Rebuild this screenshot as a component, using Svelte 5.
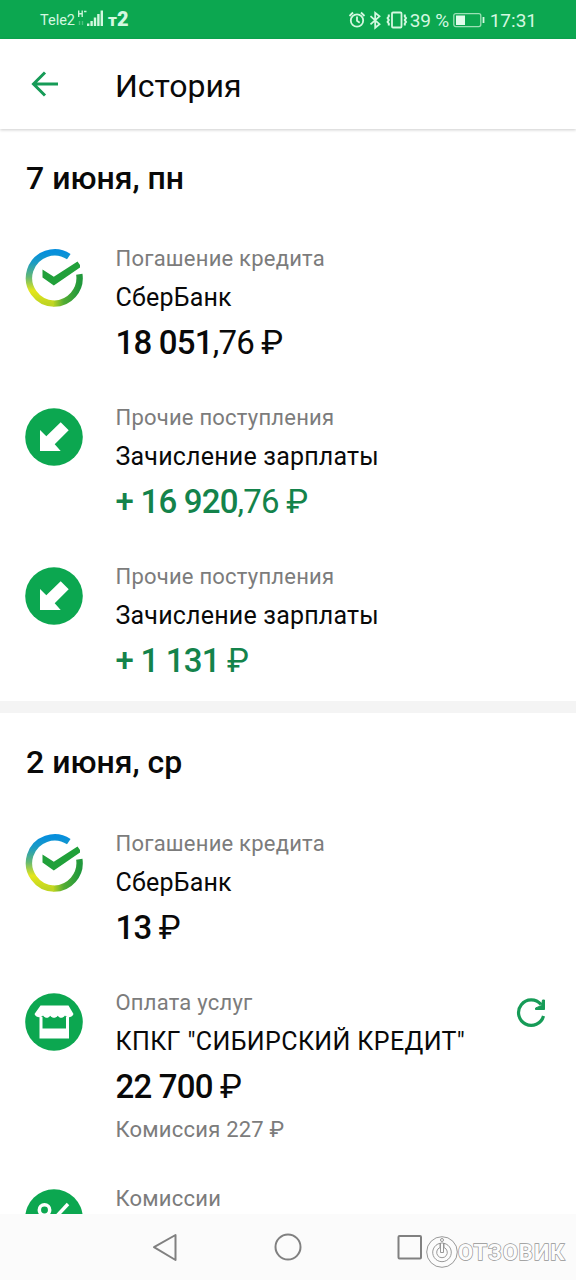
<script>
	const days = [
		{
			date: '7 июня, пн',
			items: [
				{ icon: 'sber', category: 'Погашение кредита', name: 'СберБанк', whole: '18 051', rest: ',76 ₽' },
				{ icon: 'income', category: 'Прочие поступления', name: 'Зачисление зарплаты', whole: '+ 16 920', rest: ',76 ₽', plus: true },
				{ icon: 'income', category: 'Прочие поступления', name: 'Зачисление зарплаты', whole: '+ 1 131', rest: ' ₽', plus: true }
			]
		},
		{
			date: '2 июня, ср',
			items: [
				{ icon: 'sber', category: 'Погашение кредита', name: 'СберБанк', whole: '13', rest: ' ₽' },
				{ icon: 'shop', category: 'Оплата услуг', name: 'КПКГ "СИБИРСКИЙ КРЕДИТ"', whole: '22 700', rest: ' ₽', fee: 'Комиссия 227 ₽', repeat: true },
				{ icon: 'percent', category: 'Комиссии' }
			]
		}
	];
</script>

<div class="phone">
	<div class="status">
		<span class="carrier">Tele2</span>
		<svg class="signal" width="29" height="20" viewBox="0 0 29 20">
			<g fill="none" stroke="#c9f5d8" stroke-width="1.4">
				<path d="M1.700 1.500v6.500M5.200 1.500v6.500M1.500 4.700h4M7 2.500h2.500" />
				<path d="M2.500 12v4M5.500 12v4" opacity=".35" />
			</g>
			<path fill="#d4f8e0" d="M10 14.500h2.400V17H10zM13.400 12h2.400v5h-2.400zM16.800 8.500h2.400V17h-2.400zM20.200 5h2.400v12h-2.400zM23.600 1.500H26V17h-2.400z" />
		</svg>
		<span class="t-logo">т<b>2</b></span>
		<span class="space"></span>
		<svg width="62" height="20" viewBox="0 0 62 20" fill="none" stroke="#d4f8e0" stroke-width="1.8">
			<circle cx="9" cy="10.500" r="6.200" />
			<path d="M9 6.500v4.300l2.700 2M1.500 6L5 2.500M16.500 6L13 2.500" />
			<path d="M22.500 6.200l9 8-4.300 3.600v-15l4.300 3.500-9 8" />
			<rect x="44" y="2.500" width="9.500" height="15" rx="1" />
			<path d="M40.800 4.500v2l-1.200 1.500 1.200 2-1.200 2 1.200 1.500v2M56.800 4.500v2l1.200 1.500-1.200 2 1.200 2-1.200 1.500v2" stroke-width="2" />
		</svg>
		<span class="battery-text">39 %</span>
		<svg class="battery" width="32" height="16" viewBox="0 0 32 16">
			<rect x=".8" y="1.600" width="27" height="13" rx="2" fill="none" stroke="#9be0b5" stroke-width="1.300" />
			<rect x="3" y="3.500" width="9" height="9.500" fill="#e2fceb" />
			<path d="M30.500 5v6" stroke="#d4f8e0" stroke-width="1.800" />
		</svg>
		<span class="clock">17:31</span>
	</div>

	<header>
		<svg width="28" height="26" viewBox="0 0 28 26" fill="none" stroke="#169b57" stroke-width="3">
			<path d="M27 13H3M14 1.500L2.500 13 14 24.500" />
		</svg>
		<h1>История</h1>
	</header>

	<main>
		{#each days as day}
			<section>
				<h2>{day.date}</h2>
				{#each day.items as item}
					<div class="item">
						<svg class="icon" width="58" height="58" viewBox="0 0 58 58">
							{#if item.icon === 'sber'}
								<defs>
									<linearGradient id="left" x1="0" y1="0" x2="0" y2="1">
										<stop offset="0" stop-color="#078fdc" />
										<stop offset=".2" stop-color="#1b9bc3" />
										<stop offset=".48" stop-color="#63b874" />
										<stop offset=".75" stop-color="#e5e61c" />
										<stop offset="1" stop-color="#c0d522" />
									</linearGradient>
									<linearGradient id="right" x1="0" y1="0" x2="1" y2="0">
										<stop offset="0" stop-color="#b8d322" />
										<stop offset=".4" stop-color="#52ac34" />
										<stop offset="1" stop-color="#21983c" />
									</linearGradient>
								</defs>
								<g fill="none" stroke-width="6.4">
									<path d="M43.800 7.700A25.600 25.600 0 1 0 29 54.600" stroke="url(#left)" />
									<path d="M28.500 54.600A25.600 25.600 0 0 0 54.300 25.200" stroke="url(#right)" />
								</g>
								<path d="M17.500 20.500l11.300 7.300L52.500 12.500l2.500 3.500v2.500L28.800 36.500l-11.300-8z" fill="#21a03a" />
							{:else}
								<circle cx="29" cy="29" r="28.800" fill="#0ca750" />
								{#if item.icon === 'income'}
									<path fill="#fff" d="M35.700 14.300l8 8-14 14 6 6.700H15V22l6.300 6.300z" />
								{:else if item.icon === 'shop'}
									<path fill="#fff" d="M15.500 12.500h28l5 8.500c-1.500 3.800-6.500 4.200-8.500 1.500-2 3-5.500 3-7.300.3-1.800 2.700-5.600 2.700-7.400 0-1.800 2.700-5.300 2.700-7.300-.3-2 2.700-7 2.300-8.500-1.500z" />
									<path fill="#fff" d="M14.500 24h3v11.500h23.500V24h3v21.500H14.500z" />
								{:else}
									<g fill="none" stroke="#fff" stroke-width="3.500">
										<circle cx="19.500" cy="21" r="5.200" />
										<circle cx="38" cy="38" r="5.200" />
										<path d="M43 15L16 44" />
									</g>
								{/if}
							{/if}
						</svg>
						<div class="info">
							<p class="category">{item.category}</p>
							{#if item.name}
								<p class="name" class:caps={item.icon === 'shop'}>{item.name}</p>
								<p class="amount" class:plus={item.plus}><b>{item.whole}</b>{item.rest}</p>
							{/if}
							{#if item.fee}
								<p class="category fee">{item.fee}</p>
							{/if}
						</div>
						{#if item.repeat}
							<svg class="repeat" width="32" height="32" viewBox="0 0 32 32">
								<path d="M26 7.500A12.700 12.700 0 1 0 28.500 19" fill="none" stroke="#169b57" stroke-width="3.200" />
								<path d="M29.500 3v9.500H20.500v-1.500l6-2.500 1-5.500z" fill="#169b57" stroke="#169b57" />
							</svg>
						{/if}
					</div>
				{/each}
			</section>
		{/each}
	</main>

	<nav>
		<svg width="576" height="66" viewBox="0 0 576 66" fill="none" stroke="#808080" stroke-width="2" stroke-linejoin="round">
			<path d="M175.500 21v25L154 33.200z" />
			<circle cx="288" cy="33" r="12.500" />
			<rect x="398.500" y="22" width="22.500" height="22.500" rx="1" />
		</svg>
		<div class="watermark">
			<svg width="32" height="32" viewBox="0 0 32 32" fill="#fcfcfc" stroke="#8c8c8c" stroke-width=".9">
				<circle cx="16" cy="16" r="15.300" />
				<path d="M14 7.300a9.300 9.300 0 1 0 4 0v4.200a5.300 5.300 0 1 1-4 0z" />
				<path d="M14.500 7h3v9.500h-3z" />
				<circle cx="16" cy="4" r="1.500" />
			</svg>
			<span>ОТЗОВИК</span>
		</div>
	</nav>
</div>

<style>
	:global(body) {
		background: #fff;
	}

	.phone {
		width: 576px;
		height: 1280px;
		overflow: hidden;
		display: flex;
		flex-direction: column;
		font-family: Roboto, "Liberation Sans", sans-serif;
		color: #090909;
	}

	h1, h2, p {
		margin: 0;
	}

	.status {
		flex: none;
		height: 39px;
		box-sizing: border-box;
		padding: 1px 39px 0 40px;
		display: flex;
		align-items: center;
		background: #0ca750;
		color: #d4f8e0;
	}

	.carrier {
		font-size: 14.5px;
		width: 37px;
	}

	.signal {
		margin-top: -3px;
	}

	.t-logo {
		font-size: 17px;
		font-weight: 900;
		margin: -2px 0 0 2px;
	}

	.t-logo b {
		font-size: 20px;
		font-weight: 900;
	}

	.space {
		flex: 1;
	}

	.battery-text {
		font-size: 19px;
		width: 43px;
		white-space: nowrap;
		letter-spacing: -0.2px;
	}

	.clock {
		font-size: 19px;
		margin-left: 5px;
	}

	header {
		flex: none;
		height: 90px;
		display: flex;
		align-items: center;
		padding-left: 31px;
		box-shadow: 0 1px 3px rgba(0, 0, 0, 0.2);
		z-index: 1;
	}

	h1 {
		font-size: 32px;
		font-weight: 400;
		margin: 4px 0 0 56px;
	}

	main {
		flex: 1;
		min-height: 0;
		overflow: hidden;
	}

	section {
		padding-bottom: 16px;
	}

	section + section {
		border-top: 12px solid #f4f4f4;
		margin-top: -32px;
	}

	h2 {
		font-size: 32px;
		font-weight: 500;
		line-height: 40px;
		padding: 29px 26px 42px;
	}

	section + section h2 {
		padding-bottom: 43px;
	}

	.item {
		display: flex;
		align-items: flex-start;
		padding: 0 29px 32px 25px;
	}

	.icon {
		margin-top: 9px;
	}

	.info {
		flex: 1;
		margin-left: 32.5px;
		white-space: nowrap;
	}

	.category {
		font-size: 22px;
		line-height: 38px;
		letter-spacing: 0.22px;
		color: #7c7c7c;
	}

	.name {
		font-size: 25px;
		line-height: 40px;
		letter-spacing: 0.2px;
	}

	.caps {
		letter-spacing: 0.38px;
	}

	.amount {
		font-size: 33px;
		line-height: 50px;
		margin-bottom: -1px;
		letter-spacing: -0.8px;
	}

	.amount b {
		font-weight: 500;
	}

	.plus {
		color: #14834b;
	}

	.fee {
		line-height: 37px;
	}

	.repeat {
		margin-top: 13px;
	}

	nav {
		flex: none;
		position: relative;
		height: 66px;
		background: #fbfbfb;
	}

	.watermark {
		position: absolute;
		left: 426px;
		top: 22px;
		display: flex;
		align-items: center;
	}

	.watermark span {
		font-size: 22px;
		font-weight: 700;
		letter-spacing: 1px;
		color: #fcfcfc;
		-webkit-text-stroke: 1.4px #959595;
		paint-order: stroke;
	}
</style>
